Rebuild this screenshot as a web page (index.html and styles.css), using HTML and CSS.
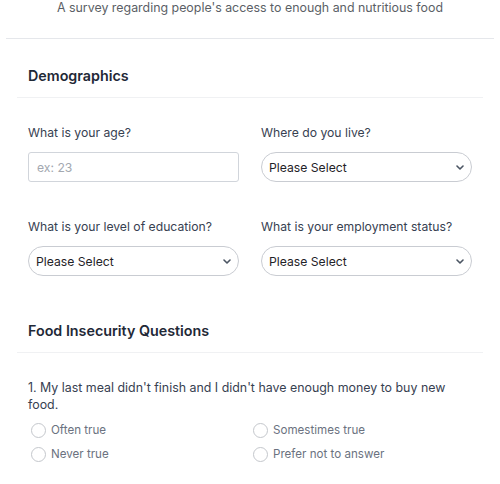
FILE: index.html
```html
<!DOCTYPE html>
<html lang="en">
<head>
    <meta charset="UTF-8">
    <meta name="viewport" content="width=device-width, initial-scale=1.0">
    <title>Food Insecurity Survey</title>
    <link rel="stylesheet" href="styles.css">
</head>
<body>
    <div class="survey">
        <div class="survey-header">
            <p class="subtitle">A survey regarding people's access to enough and nutritious food</p>
        </div>

        <!-- Demographics -->
        <section class="section">
            <h2 class="section-title">Demographics</h2>
            <div class="fields">
                <div class="field">
                    <label for="age">What is your age?</label>
                    <input type="text" id="age" class="text-input" placeholder="ex: 23">
                </div>
                <div class="field">
                    <label for="live">Where do you live?</label>
                    <div class="select-wrap">
                        <select id="live" class="select">
                            <option>Please Select</option>
                        </select>
                        <svg class="chevron" width="8" height="5" viewBox="0 0 8 5"><path d="M1 1l3 3 3-3" fill="none" stroke="#4b5563" stroke-width="1.6" stroke-linecap="round" stroke-linejoin="round"/></svg>
                    </div>
                </div>
                <div class="field">
                    <label for="edu">What is your level of education?</label>
                    <div class="select-wrap">
                        <select id="edu" class="select">
                            <option>Please Select</option>
                        </select>
                        <svg class="chevron" width="8" height="5" viewBox="0 0 8 5"><path d="M1 1l3 3 3-3" fill="none" stroke="#4b5563" stroke-width="1.6" stroke-linecap="round" stroke-linejoin="round"/></svg>
                    </div>
                </div>
                <div class="field">
                    <label for="job">What is your employment status?</label>
                    <div class="select-wrap">
                        <select id="job" class="select">
                            <option>Please Select</option>
                        </select>
                        <svg class="chevron" width="8" height="5" viewBox="0 0 8 5"><path d="M1 1l3 3 3-3" fill="none" stroke="#4b5563" stroke-width="1.6" stroke-linecap="round" stroke-linejoin="round"/></svg>
                    </div>
                </div>
            </div>
        </section>

        <!-- Food insecurity -->
        <section class="section">
            <h2 class="section-title">Food Insecurity Questions</h2>
            <div class="question">
                <p class="question-text">1. My last meal didn't finish and I didn't have enough money to buy new food.</p>
                <div class="options">
                    <label class="option"><input type="radio" name="q1"><span>Often true</span></label>
                    <label class="option"><input type="radio" name="q1"><span>Somestimes true</span></label>
                    <label class="option"><input type="radio" name="q1"><span>Never true</span></label>
                    <label class="option"><input type="radio" name="q1"><span>Prefer not to answer</span></label>
                </div>
            </div>
        </section>
    </div>
</body>
</html>
```

FILE: styles.css
```css
/* Gaya umum */
body {
    margin: 0;
    font-family: Inter, "Noto Sans", sans-serif;
    color: #374151;
    background: #fff;
}

.survey {
    width: 488px;
    margin: 0 auto;
}

.survey-header {
    height: 38px;
    border-bottom: 1px solid #e5e7eb;
}
.subtitle {
    margin: 0;
    font-size: 12.4px;
    line-height: 15px;
    text-align: center;
    color: #5b5f66;
}

/* Bagian form */
.section {
    padding: 27px 11px 0;
}
.section-title {
    margin: 0;
    padding: 0 0 11px 11px;
    font-size: 14.3px;
    line-height: 20px;
    font-weight: 600;
    color: #1f2937;
    border-bottom: 1px solid #f0f1f3;
}

.fields {
    display: grid;
    grid-template-columns: 1fr 1fr;
    column-gap: 22px;
    row-gap: 36px;
    padding: 26px 11px 18px;
}
.field label {
    display: block;
    font-size: 12.2px;
    line-height: 18px;
    margin-bottom: 10px;
    color: #374151;
}

.text-input {
    box-sizing: border-box;
    width: 100%;
    height: 30px;
    padding: 0 8px;
    border: 1px solid #d1d5db;
    border-radius: 3px;
    font-family: inherit;
    font-size: 12.2px;
    color: #374151;
    outline: none;
}
.text-input::placeholder { color: #a3a8b0; }

.select-wrap {
    position: relative;
}
.select {
    box-sizing: border-box;
    width: 100%;
    height: 30px;
    padding: 0 24px 0 7px;
    border: 1px solid #c9ccd2;
    border-radius: 15px;
    background: #fff;
    font-family: inherit;
    font-size: 12.2px;
    color: #1f2328;
    appearance: none;
    -webkit-appearance: none;
}
.chevron {
    position: absolute;
    right: 8px;
    top: 13px;
}

/* Pertanyaan */
.question {
    padding: 26px 11px 0;
}
.question-text {
    margin: 0 0 5px;
    font-size: 12.4px;
    line-height: 17px;
    color: #374151;
}
.options {
    display: grid;
    grid-template-columns: 1fr 1fr;
}
.option {
    display: flex;
    align-items: center;
    height: 24px;
    font-size: 11.6px;
    color: #6b7280;
}
.option input {
    appearance: none;
    -webkit-appearance: none;
    box-sizing: border-box;
    width: 15px;
    height: 15px;
    margin: 0 5px 0 3px;
    border: 1px solid #c4c7cc;
    border-radius: 50%;
}
```
